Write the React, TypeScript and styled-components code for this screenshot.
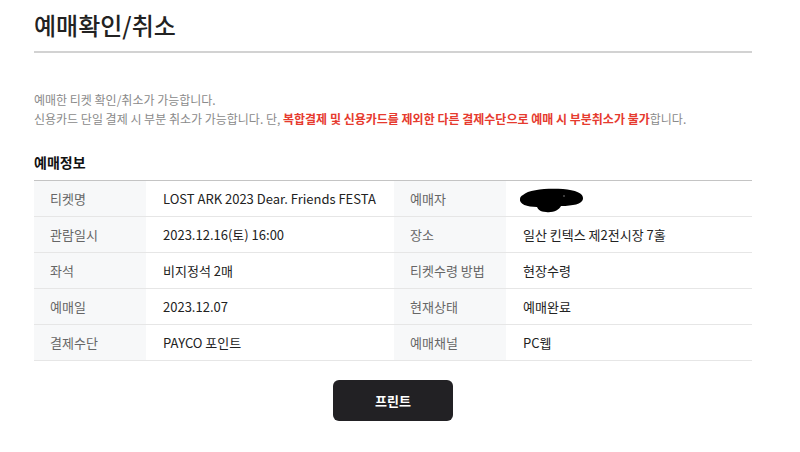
import * as React from 'react'
import styled, { createGlobalStyle } from 'styled-components'

const GlobalStyle = createGlobalStyle`
  body {
    margin: 0;
    background: #fff;
    font-family: "Noto Sans CJK KR", "Noto Sans", sans-serif;
    color: #222;
  }
`

interface InfoRow {
  label: string
  value: React.ReactNode
  label2: string
  value2: React.ReactNode
}

// 예매자 이름 가림 처리
const Redacted: React.FC = () => (
  <BlobStyled width="66" height="26" viewBox="0 0 66 26">
    <path
      d="M4 7 C10 1 30 0 44 1 C56 2 65 5 64 11 C63 16 54 18 42 18 C40 22 34 25 27 24 C21 24 19 21 18 19 C8 19 0 16 1 11 C1 9 2 8 4 7 Z"
      fill="#000"
    />
    <circle cx="45" cy="8" r="0.8" fill="#888" />
  </BlobStyled>
)

const rows: InfoRow[] = [
  { label: '티켓명', value: 'LOST ARK 2023 Dear. Friends FESTA', label2: '예매자', value2: <Redacted /> },
  { label: '관람일시', value: '2023.12.16(토) 16:00', label2: '장소', value2: '일산 킨텍스 제2전시장 7홀' },
  { label: '좌석', value: '비지정석 2매', label2: '티켓수령 방법', value2: '현장수령' },
  { label: '예매일', value: '2023.12.07', label2: '현재상태', value2: '예매완료' },
  { label: '결제수단', value: 'PAYCO 포인트', label2: '예매채널', value2: 'PC웹' },
]

export default function App() {
  return (
    <>
      <GlobalStyle />
      <PageStyled>
        <HeaderStyled>
          <h2>예매확인/취소</h2>
        </HeaderStyled>

        <NoticeStyled>
          <p>예매한 티켓 확인/취소가 가능합니다.</p>
          <p>
            신용카드 단일 결제 시 부분 취소가 가능합니다. 단,{' '}
            <strong>복합결제 및 신용카드를 제외한 다른 결제수단으로 예매 시 부분취소가 불가</strong>합니다.
          </p>
        </NoticeStyled>

        <SectionTitle>예매정보</SectionTitle>

        <TableStyled>
          {rows.map((row) => (
            <React.Fragment key={row.label}>
              <Cell $head>{row.label}</Cell>
              <Cell>{row.value}</Cell>
              <Cell $head>{row.label2}</Cell>
              <Cell>{row.value2}</Cell>
            </React.Fragment>
          ))}
        </TableStyled>

        <ButtonRow>
          <PrintButton type="button">프린트</PrintButton>
        </ButtonRow>
      </PageStyled>
    </>
  )
}

const PageStyled = styled.div`
  width: 718px;
  padding: 0 48px 0 34px;
`

const HeaderStyled = styled.div`
  padding: 9px 0 10px;
  border-bottom: 2px solid #d2d2d2;

  h2 {
    margin: 0;
    font-size: 24px;
    line-height: 32px;
    font-weight: 500;
    color: #222;
  }
`

const NoticeStyled = styled.div`
  margin-top: 37px;
  font-size: 12px;
  line-height: 19px;
  color: #8a8a8a;

  p {
    margin: 0;
  }

  strong {
    color: #e63a2e;
    font-weight: 700;
  }
`

const SectionTitle = styled.h3`
  margin: 24px 0 8px;
  font-size: 14px;
  line-height: 20px;
  font-weight: 700;
  color: #111;
`

const TableStyled = styled.div`
  display: grid;
  grid-template-columns: 112px 248px 112px 1fr;
  border-top: 1px solid #c4c4c4;
`

const Cell = styled.div<{ $head?: boolean }>`
  display: flex;
  align-items: center;
  height: 35px;
  padding-left: ${({ $head }) => ($head ? '16px' : '17px')};
  border-bottom: 1px solid #e6e6e6;
  background: ${({ $head }) => ($head ? '#f7f8f9' : '#fff')};
  color: ${({ $head }) => ($head ? '#666' : '#222')};
  font-size: 13px;
  white-space: nowrap;
`

const BlobStyled = styled.svg`
  margin: 4px 0 0 -4px;
`

const ButtonRow = styled.div`
  display: flex;
  justify-content: center;
  margin-top: 19px;
`

const PrintButton = styled.button`
  width: 120px;
  height: 41px;
  border: none;
  border-radius: 6px;
  background: #222124;
  color: #fff;
  font-family: inherit;
  font-size: 13px;
  font-weight: 700;
  cursor: pointer;
`
